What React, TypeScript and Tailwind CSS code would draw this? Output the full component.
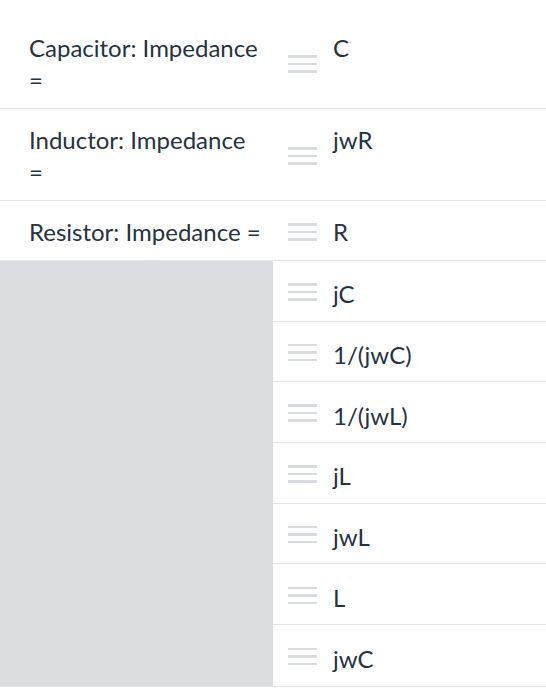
import React from 'react';

const pairs = [
  { prompt: 'Capacitor: Impedance =', answer: 'C' },
  { prompt: 'Inductor: Impedance =', answer: 'jwR' },
  { prompt: 'Resistor: Impedance =', answer: 'R' },
];

const bank = ['jC', '1/(jwC)', '1/(jwL)', 'jL', 'jwL', 'L', 'jwC'];

function Handle() {
  return (
    <div className="flex w-[29px] shrink-0 flex-col gap-[5px]">
      <span className="block h-[2.5px] w-full bg-[#d8dbe1]" />
      <span className="block h-[2.5px] w-full bg-[#d8dbe1]" />
      <span className="block h-[2.5px] w-full bg-[#d8dbe1]" />
    </div>
  );
}

export default function App() {
  return (
    <div
      className="w-[546px] bg-white pt-[17px] text-[24px] leading-8 text-[#25333f]"
      style={{ fontFamily: 'Lato, "Open Sans", sans-serif' }}
    >
      {pairs.map((p) => (
        <div key={p.prompt} className="flex border-b border-[#e3e4e6]">
          <div className="w-[273px] shrink-0 pb-[12px] pl-[29px] pr-[8px] pt-[15px]">{p.prompt}</div>
          <div className="flex flex-1 items-center gap-4 pb-[12px] pl-[15px] pt-[15px]">
            <Handle />
            <div className="self-start">{p.answer}</div>
          </div>
        </div>
      ))}

      <div className="flex border-b border-[#e3e4e6]">
        <div className="w-[273px] shrink-0 bg-[#dcdde1]" />
        <div className="flex flex-1 flex-col">
          {bank.map((b, i) => (
            <div
              key={b}
              className={`flex h-[60.7px] items-center gap-4 pl-[15px] pt-[2px] ${i < bank.length - 1 ? 'border-b border-[#e3e4e6]' : ''}`}
            >
              <Handle />
              <span className="pt-[5px]">{b}</span>
            </div>
          ))}
        </div>
      </div>
    </div>
  );
}
